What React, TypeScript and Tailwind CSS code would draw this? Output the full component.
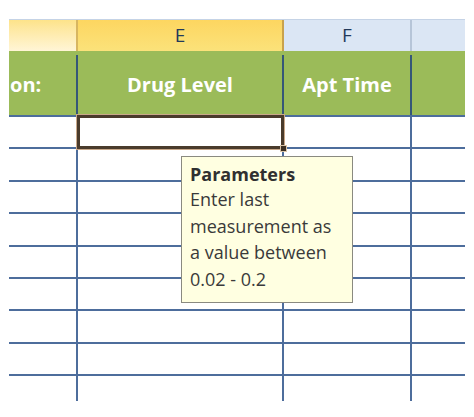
import React from "react";

const rows = Array.from({ length: 8 });

export default function App() {
  return (
    <div className="relative w-[474px] h-[417px] bg-white overflow-hidden font-['Open_Sans',sans-serif]">
      <div className="absolute left-[9px] top-[19px] w-[456px]">
        {/* column letters */}
        <div className="flex h-[32px] border-t border-[#c5d3e6] text-[19px] text-[#22395a]">
          <div className="w-[69px] border-r-2 border-[#d8b660] bg-gradient-to-b from-[#fde38a] to-[#fff5d6]" />
          <div className="w-[206px] flex items-center justify-center border-r-2 border-[#c9a24c] bg-gradient-to-b from-[#fdd660] to-[#fbe27a]">
            E
          </div>
          <div className="w-[128px] flex items-center justify-center border-r-2 border-[#b6c5d8] bg-[#dbe6f4]">
            F
          </div>
          <div className="flex-1 bg-[#dbe6f4]" />
        </div>
        {/* header row */}
        <div className="flex h-[66px] pt-[4px] bg-[#9bbb59] border-b-2 border-[#4d6d9c] text-white font-bold text-[20px]">
          <div className="w-[69px] flex items-center border-r-2 border-[#355778] overflow-hidden">
            <span className="ml-[1px]">on:</span>
          </div>
          <div className="w-[206px] flex items-center justify-center border-r-2 border-[#355778]">
            Drug Level
          </div>
          <div className="w-[128px] flex items-center justify-center border-r-2 border-[#355778]">
            Apt Time
          </div>
          <div className="flex-1" />
        </div>
        {/* data rows */}
        {rows.map((_, i) => (
          <div key={i} className="flex h-[32.4px] border-b-2 border-[#4d6d9c]">
            <div className="w-[69px] border-r-2 border-[#4d6d9c]" />
            <div className="w-[206px] border-r-2 border-[#4d6d9c]" />
            <div className="w-[128px] border-r-2 border-[#4d6d9c]" />
            <div className="flex-1" />
          </div>
        ))}
        <div className="flex h-[25px]">
          <div className="w-[69px] border-r-2 border-[#4d6d9c]" />
          <div className="w-[206px] border-r-2 border-[#4d6d9c]" />
          <div className="w-[128px] border-r-2 border-[#4d6d9c]" />
          <div className="flex-1" />
        </div>
      </div>

      {/* selected cell */}
      <div className="absolute left-[77px] top-[115px] w-[207px] h-[34px] border-[3px] border-[#4a3b2c] outline outline-1 outline-[#c9a88a]" />
      <div className="absolute left-[280px] top-[145px] w-[7px] h-[7px] bg-[#3b2e22] border border-[#d9c4a8]" />

      {/* input message tooltip */}
      <div className="absolute left-[181px] top-[156px] w-[172px] h-[147px] bg-[#ffffe1] border border-[#8a8a80] pl-[8px] pt-[5px] text-[#3a3a3a] text-[18px] leading-[26.5px]">
        <div className="font-bold leading-[24px] text-[#303030]">Parameters</div>
        <div>Enter last</div>
        <div>measurement as</div>
        <div>a value between</div>
        <div>0.02 - 0.2</div>
      </div>
    </div>
  );
}
